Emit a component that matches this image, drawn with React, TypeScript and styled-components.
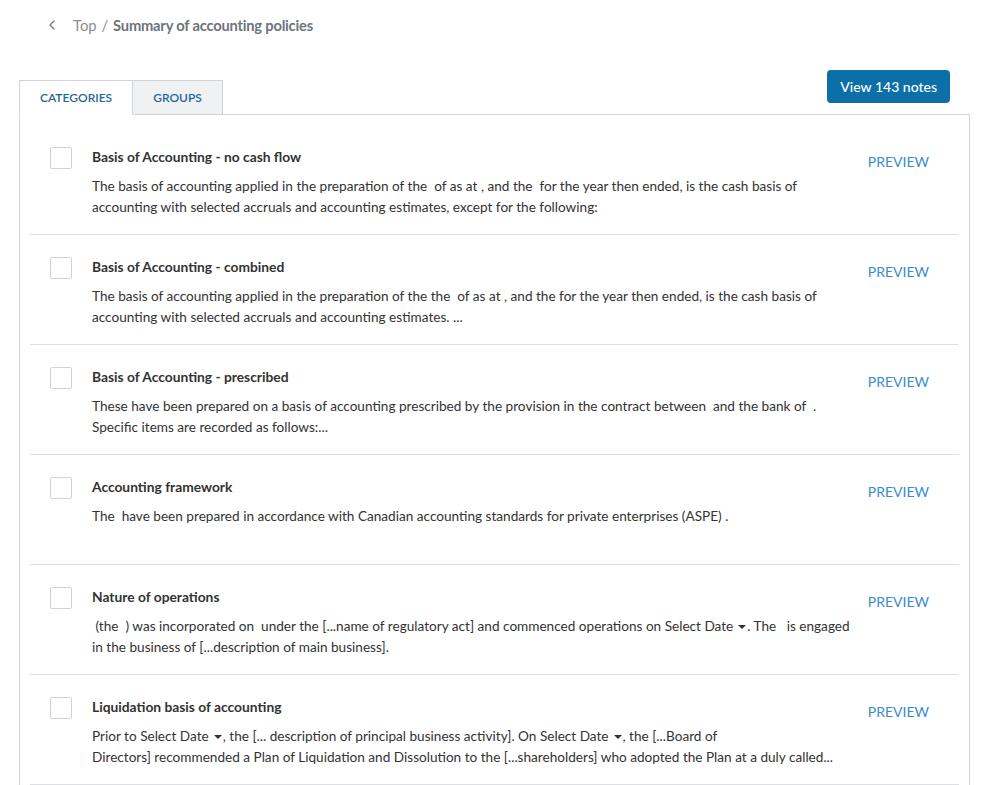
import React from 'react';
import styled, { createGlobalStyle } from 'styled-components';
import { ChevronLeft } from 'lucide-react';

const GlobalStyle = createGlobalStyle`
    *, *::before, *::after {
        box-sizing: border-box;
    }
    body {
        margin: 0;
        background: #ffffff;
        font-family: Lato, "Open Sans", Arial, sans-serif;
        color: #333333;
    }
`;

const Page = styled.div`
    padding: 0 20px 0 19px;
`;

const Breadcrumb = styled.nav`
    display: flex;
    align-items: center;
    height: 49px;
    padding-left: 25px;
    font-size: 14.7px;
`;

const BackButton = styled.button`
    display: flex;
    align-items: center;
    padding: 0;
    margin-right: 13px;
    border: none;
    background: none;
    color: #777b80;
    cursor: pointer;
`;

const Crumb = styled.span`
    color: #8a8e93;
`;

const Divider = styled.span`
    color: #8a8e93;
    margin: 0 5px;
`;

const Current = styled.span`
    color: #6f747a;
    font-weight: 700;
    letter-spacing: -0.2px;
`;

const Header = styled.div`
    display: flex;
    align-items: flex-end;
    justify-content: space-between;
    margin-top: 21px;
`;

const Tabs = styled.div`
    display: flex;
    margin-bottom: -1px;
`;

const Tab = styled.button<{ $active?: boolean }>`
    height: 35px;
    padding: 0 20px;
    border: 1px solid #cfd4db;
    border-bottom: ${({ $active }) => ($active ? '1px solid #ffffff' : '1px solid #cfd4db')};
    border-left: ${({ $active }) => ($active ? '1px solid #cfd4db' : 'none')};
    background: ${({ $active }) => ($active ? '#ffffff' : '#f0f1f3')};
    color: #1f679a;
    font-family: inherit;
    font-size: 12px;
    font-weight: 600;
    text-transform: uppercase;
    cursor: pointer;
    position: relative;
    z-index: 1;
`;

const PrimaryButton = styled.button`
    height: 33px;
    padding: 0 13px;
    margin: 0 20px 11px 0;
    border: none;
    border-radius: 4px;
    background: #0b6fa8;
    color: #ffffff;
    font-family: inherit;
    font-size: 14px;
    font-weight: 500;
    cursor: pointer;
`;

const Panel = styled.div`
    border: 1px solid #cfd4db;
    border-bottom: none;
    padding: 10px 10px 0;
`;

const Row = styled.div`
    display: flex;
    align-items: flex-start;
    height: 110px;
    padding: 22px 30px 0 20px;
    border-bottom: 1px solid #dcdfe5;
`;

const Checkbox = styled.span`
    flex: none;
    width: 22px;
    height: 22px;
    border: 1px solid #cfd3d8;
    border-radius: 2px;
    background: #ffffff;
    margin-right: 20px;
`;

const Content = styled.div`
    flex: 1;
    min-width: 0;
`;

const Title = styled.div`
    font-size: 13.8px;
    font-weight: 700;
    line-height: 20px;
    color: #333333;
`;

const Description = styled.p`
    margin: 9px 0 0;
    font-size: 13.6px;
    line-height: 21px;
    color: #333333;
    white-space: pre-wrap;
`;

const Preview = styled.button`
    flex: none;
    margin: 5px 0 0 10px;
    padding: 0;
    border: none;
    background: none;
    color: #3a8ccb;
    font-family: inherit;
    font-size: 14px;
    line-height: 20px;
    text-transform: uppercase;
    cursor: pointer;
`;

const Caret = styled.span`
    display: inline-block;
    width: 0;
    height: 0;
    margin: 0 1px 1px 5px;
    border-left: 4px solid transparent;
    border-right: 4px solid transparent;
    border-top: 4px solid #333333;
    vertical-align: middle;
`;

const SelectDate = () => (
    <>
        Select Date
        <Caret />
    </>
);

const notes: { title: string; body: React.ReactNode }[] = [
    {
        title: 'Basis of Accounting - no cash flow',
        body: 'The basis of accounting applied in the preparation of the  of as at , and the  for the year then ended, is the cash basis of accounting with selected accruals and accounting estimates, except for the following:',
    },
    {
        title: 'Basis of Accounting - combined',
        body: 'The basis of accounting applied in the preparation of the the  of as at , and the for the year then ended, is the cash basis of accounting with selected accruals and accounting estimates. ...',
    },
    {
        title: 'Basis of Accounting - prescribed',
        body: 'These have been prepared on a basis of accounting prescribed by the provision in the contract between  and the bank of  . Specific items are recorded as follows:...',
    },
    {
        title: 'Accounting framework',
        body: 'The  have been prepared in accordance with Canadian accounting standards for private enterprises (ASPE) .',
    },
    {
        title: 'Nature of operations',
        body: (
            <>
                {' (the  ) was incorporated on  under the [...name of regulatory act] and commenced operations on '}
                <SelectDate />
                {'. The   is engaged in the business of [...description of main business].'}
            </>
        ),
    },
    {
        title: 'Liquidation basis of accounting',
        body: (
            <>
                {'Prior to '}
                <SelectDate />
                {', the [... description of principal business activity]. On '}
                <SelectDate />
                {', the [...Board of\nDirectors] recommended a Plan of Liquidation and Dissolution to the [...shareholders] who adopted the Plan at a duly called...'}
            </>
        ),
    },
];

export default function App() {
    return (
        <Page>
            <GlobalStyle />
            <Breadcrumb>
                <BackButton aria-label="Back">
                    <ChevronLeft size={16} strokeWidth={2} />
                </BackButton>
                <Crumb>Top</Crumb>
                <Divider>/</Divider>
                <Current>Summary of accounting policies</Current>
            </Breadcrumb>

            <Header>
                <Tabs>
                    <Tab $active>Categories</Tab>
                    <Tab>Groups</Tab>
                </Tabs>
                <PrimaryButton>View 143 notes</PrimaryButton>
            </Header>

            <Panel>
                {notes.map((note) => (
                    <Row key={note.title}>
                        <Checkbox />
                        <Content>
                            <Title>{note.title}</Title>
                            <Description>{note.body}</Description>
                        </Content>
                        <Preview>Preview</Preview>
                    </Row>
                ))}
            </Panel>
        </Page>
    );
}
